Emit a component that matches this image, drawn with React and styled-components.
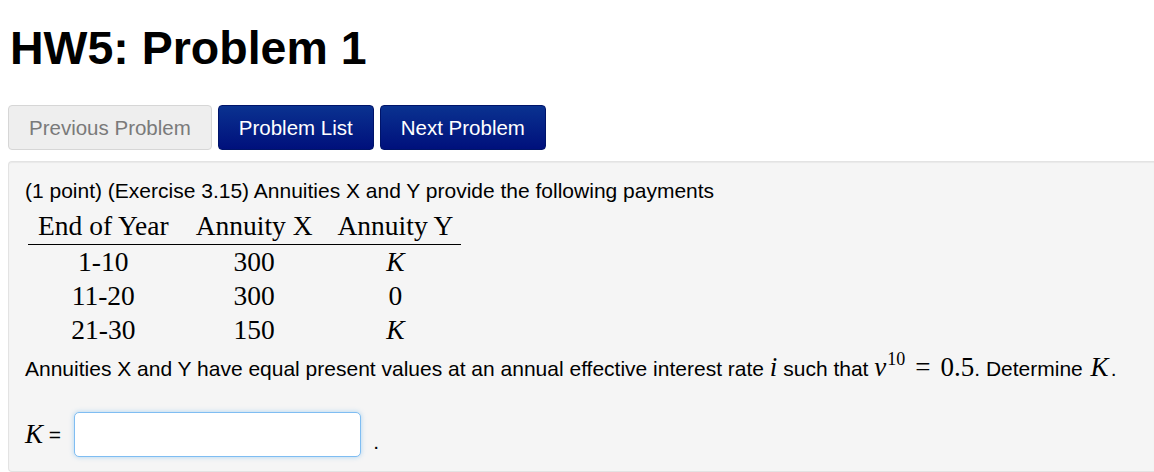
import React from "react";
import styled, { createGlobalStyle } from "styled-components";

const Global = createGlobalStyle`
  html, body { margin: 0; padding: 0; background: #fff; }
  body { font-family: "Liberation Sans", Arial, sans-serif; color: #000; overflow: hidden; }
`;

const Page = styled.div`
  padding: 0 0 0 8px;
  width: 1154px;
  box-sizing: border-box;
`;

const Title = styled.h1`
  margin: 0;
  padding: 22px 0 0 2px;
  font-size: 46.5px;
  line-height: 53px;
  font-weight: bold;
  height: 85px;
  box-sizing: border-box;
`;

const Nav = styled.div`
  display: flex;
  gap: 6px;
  margin-top: 20px;
`;

const NavButton = styled.button`
  height: 45px;
  padding: 0 20px;
  font-family: "Liberation Sans", Arial, sans-serif;
  font-size: 20.5px;
  border-radius: 4px;
  cursor: pointer;
  border: 1px solid ${(p) => (p.$disabled ? "#d6d6d6" : "#00146a")};
  color: ${(p) => (p.$disabled ? "#7a7a7a" : "#fff")};
  background: ${(p) =>
    p.$disabled ? "#eeeeee" : "linear-gradient(#0a3290, #00107c)"};
`;

const Well = styled.div`
  margin-top: 11px;
  background: #f5f5f5;
  border: 1px solid #e3e3e3;
  border-right: none;
  border-radius: 4px 0 0 4px;
  box-shadow: inset 0 1px 1px rgba(0, 0, 0, 0.05);
  padding: 16px 16px 14px 16px;
  height: 311px;
  box-sizing: border-box;
`;

const Text = styled.div`
  font-size: 21px;
  line-height: 26px;
`;

const Table = styled.table`
  border-collapse: collapse;
  margin: 4px 0 0 3px;
  font-family: "Liberation Serif", "Times New Roman", serif;
  font-size: 27.5px;
`;

const Th = styled.th`
  font-weight: normal;
  padding: 0 ${(p) => p.$px || 8}px 0;
  height: 36px;
  vertical-align: middle;
  border-bottom: 1px solid #000;
  white-space: nowrap;
`;

const Td = styled.td`
  text-align: center;
  height: 34px;
  padding: 0;
  line-height: 34px;
  font-style: ${(p) => (p.$it ? "italic" : "normal")};
`;

const Sentence = styled.div`
  font-size: 21px;
  margin-top: 4px;
  line-height: 32px;
`;

const M = styled.span`
  font-family: "Liberation Serif", "Times New Roman", serif;
  font-size: ${(p) => p.$size || 27}px;
  font-style: ${(p) => (p.$it ? "italic" : "normal")};
  margin: 0 ${(p) => p.$mx || 0}px;
`;

const Sup = styled.sup`
  font-family: "Liberation Serif", "Times New Roman", serif;
  font-size: 18px;
  vertical-align: 11px;
  line-height: 0;
  margin-left: 1px;
`;

const AnswerRow = styled.div`
  display: flex;
  align-items: center;
  margin-top: 27px;
  font-size: 21px;
`;

const Input = styled.input`
  width: 287px;
  height: 45px;
  box-sizing: border-box;
  margin-left: 13px;
  border: 1px solid #7fbdf2;
  border-radius: 5px;
  box-shadow: 0 0 5px rgba(82, 168, 236, 0.45);
  background: #fff;
  outline: none;
`;

const Dot = styled.span`
  margin-left: 12px;
  padding-top: 14px;
`;

export default function App() {
  return (
    <Page>
      <Global />
      <Title>HW5: Problem 1</Title>
      <Nav>
        <NavButton $disabled>Previous Problem</NavButton>
        <NavButton>Problem List</NavButton>
        <NavButton>Next Problem</NavButton>
      </Nav>
      <Well>
        <Text>
          (1 point) (Exercise 3.15) Annuities X and Y provide the following payments
        </Text>
        <Table>
          <thead>
            <tr>
              <Th $px={10}>End of Year</Th>
              <Th $px={17}>Annuity X</Th>
              <Th $px={8}>Annuity Y</Th>
            </tr>
          </thead>
          <tbody>
            <tr>
              <Td>1-10</Td>
              <Td>300</Td>
              <Td $it>K</Td>
            </tr>
            <tr>
              <Td>11-20</Td>
              <Td>300</Td>
              <Td>0</Td>
            </tr>
            <tr>
              <Td>21-30</Td>
              <Td>150</Td>
              <Td $it>K</Td>
            </tr>
          </tbody>
        </Table>
        <Sentence>
          Annuities X and Y have equal present values at an annual effective interest rate{" "}
          <M $it>i</M> such that <M $it>v</M>
          <Sup>10</Sup>
          <M $mx={10}>=</M>
          <M>0.5</M>. Determine <M $it $mx={2}>K</M>.
        </Sentence>
        <AnswerRow>
          <M $it>K</M>&nbsp;=
          <Input type="text" />
          <Dot>.</Dot>
        </AnswerRow>
      </Well>
    </Page>
  );
}
